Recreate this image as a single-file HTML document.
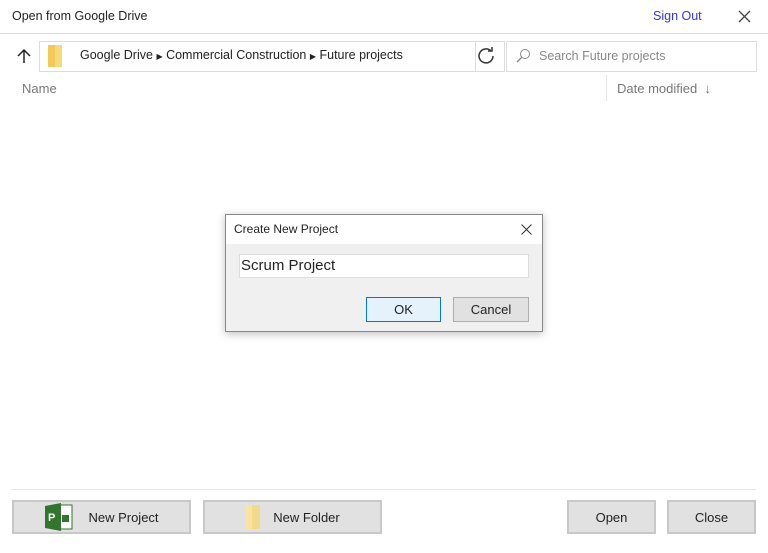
<!DOCTYPE html>
<html><head><style>
*{box-sizing:border-box;margin:0;padding:0}
body{width:768px;height:553px;background:#fff;font-family:"Liberation Sans",sans-serif;font-size:13px;color:#222;position:relative;overflow:hidden}
.a{position:absolute}
.btn{position:absolute;background:#e1e1e1;border:2px solid #c8c8c8;display:flex;align-items:center;justify-content:center;font-size:13px;color:#222}
</style></head><body>
<div class="a" style="left:12px;top:9px;font-size:12.5px">Open from Google Drive</div>
<div class="a" style="left:653px;top:9px;color:#3333ee;font-size:12.5px">Sign Out</div>
<svg class="a" style="left:738px;top:10px" width="13" height="13"><path d="M1 1L12 12M12 1L1 12" stroke="#444" stroke-width="1.3"/></svg>
<div class="a" style="left:0;top:33px;width:768px;height:1px;background:#ddd"></div>
<svg class="a" style="left:17px;top:48px" width="14" height="16"><path d="M7 15V2M1 8L7 2L13 8" stroke="#222" stroke-width="1.5" fill="none"/></svg>
<div class="a" style="left:39px;top:41px;width:466px;height:31px;border:1px solid #ddd"></div>
<div class="a" style="left:475px;top:41px;width:1px;height:31px;background:#ddd"></div>
<svg class="a" style="left:46px;top:44px" width="18" height="25"><path d="M2 1h14v22H2z" fill="#f6d97b"/><path d="M2 1h7v22H2z" fill="#f3c95a"/></svg>
<div class="a" style="left:80px;top:48px;font-size:12.5px">Google Drive <span style="font-size:8px">&#9654;</span> Commercial Construction <span style="font-size:8px">&#9654;</span> Future projects</div>
<svg class="a" style="left:478px;top:46px" width="18" height="20"><path d="M13 5A7 7 0 1 0 15 10" stroke="#333" stroke-width="1.5" fill="none"/><path d="M10 5h4V1" stroke="#333" stroke-width="1.5" fill="none"/></svg>
<div class="a" style="left:506px;top:41px;width:251px;height:31px;border:1px solid #ddd"></div>
<svg class="a" style="left:515px;top:48px" width="16" height="16"><circle cx="10" cy="6" r="4.5" stroke="#888" fill="none"/><path d="M7 9L2 14" stroke="#888" stroke-width="1.3"/></svg>
<div class="a" style="left:539px;top:49px;color:#888;font-size:12.5px">Search Future projects</div>
<div class="a" style="left:22px;top:81px;color:#777">Name</div>
<div class="a" style="left:606px;top:75px;width:1px;height:26px;background:#e6e6e6"></div>
<div class="a" style="left:617px;top:81px;color:#777">Date modified &nbsp;&#8595;</div>

<div class="a" style="left:225px;top:214px;width:318px;height:118px;background:#f0f0f0;border:1px solid #888;box-shadow:0 2px 8px rgba(0,0,0,.25)">
 <div style="height:29px;background:#fff;padding:7px 8px;font-size:12px">Create New Project</div>
 <svg class="a" style="left:295px;top:9px" width="11" height="11"><path d="M.5 .5L10.5 10.5M10.5 .5L.5 10.5" stroke="#333"/></svg>
 <div class="a" style="left:13px;top:39px;width:290px;height:24px;background:#fff;border:1px solid #ddd;font-size:15px;padding:2px 1px">Scrum Project</div>
 <div class="btn" style="left:140px;top:82px;width:75px;height:25px;background:#e5f1fb;border:1px solid #0078d7">OK</div>
 <div class="btn" style="left:227px;top:82px;width:76px;height:25px;border:1px solid #adadad">Cancel</div>
</div>

<div class="a" style="left:11px;top:489px;width:745px;height:1px;background:#e6e6e6"></div>
<div class="btn" style="left:12px;top:500px;width:179px;height:34px"><svg width="30" height="30" style="margin-right:14px"><rect x="12" y="3" width="16" height="24" fill="#fff" stroke="#31752f"/><rect x="18" y="13" width="7" height="7" fill="#31752f"/><path d="M1 4L17 1V29L1 26Z" fill="#31752f"/><text x="4" y="19" font-size="11" fill="#fff" font-family="Liberation Sans" font-weight="bold">P</text></svg>New Project</div>
<div class="btn" style="left:203px;top:500px;width:179px;height:34px"><svg width="18" height="26" style="margin-right:10px"><path d="M1 1h14v24H1z" fill="#f3d98a"/><path d="M1 1h6v24H1z" fill="#f7e3a2"/></svg>New Folder</div>
<div class="btn" style="left:567px;top:500px;width:89px;height:34px">Open</div>
<div class="btn" style="left:667px;top:500px;width:89px;height:34px">Close</div>
</body></html>
